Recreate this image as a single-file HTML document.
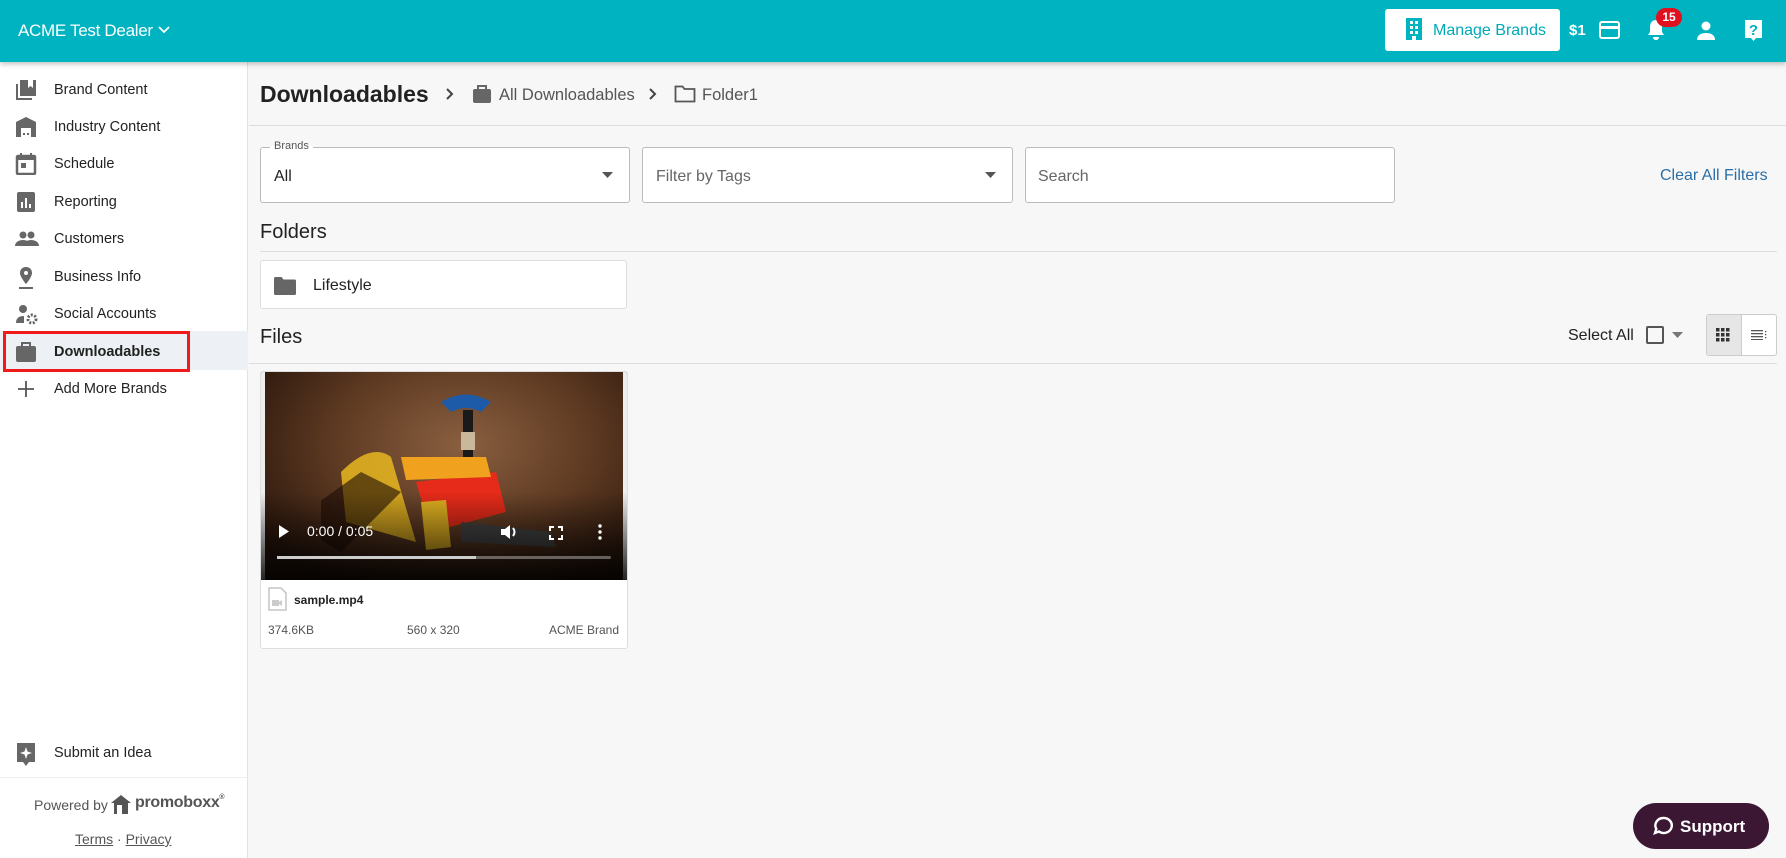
<!DOCTYPE html>
<html><head><meta charset="utf-8"><style>
*{box-sizing:border-box;margin:0;padding:0}
body{width:1786px;height:858px;overflow:hidden;background:#f7f7f7;font-family:"Liberation Sans",sans-serif;color:#222;position:relative}
.hdr{position:absolute;left:0;top:0;width:1786px;height:62px;background:#00b3c1;box-shadow:0 2px 5px rgba(0,0,0,.25);z-index:5}
.abs{position:absolute}
.side{position:absolute;left:0;top:62px;width:248px;height:796px;background:#fff;border-right:1px solid #e2e2e2}
.nav{position:absolute;left:0;width:248px;height:38px;font-size:14.5px;color:#222}
.nav span{position:absolute;left:54px;top:12px}
.nav svg{position:absolute;left:15px;top:9px}
.box{position:absolute;background:#fff;border:1px solid #ccc;border-radius:3px}
.ph{position:absolute;font-size:16px;color:#666}
</style></head><body>
<div class="hdr">
  <div class="abs" style="left:18px;top:21px;color:#fff;font-size:17px;letter-spacing:-0.3px">ACME Test Dealer</div>
  <svg class="abs" style="left:157px;top:25px" width="14" height="10" viewBox="0 0 14 10"><path d="M2 2l5 5 5-5" stroke="#fff" stroke-width="1.8" fill="none"/></svg>
  <div class="abs" style="left:1385px;top:9px;width:175px;height:42px;background:#fff;border-radius:3px"></div>
  <svg class="abs" style="left:1404px;top:18px" width="20" height="22" viewBox="0 0 20 22"><path d="M2 0h16v22H2z" fill="#00b3c1"/><g fill="#fff"><rect x="6" y="3" width="3" height="3"/><rect x="11" y="3" width="3" height="3"/><rect x="6" y="8" width="3" height="3"/><rect x="11" y="8" width="3" height="3"/><rect x="6" y="13" width="3" height="3"/><rect x="11" y="13" width="3" height="3"/><rect x="8" y="18" width="4" height="4"/></g></svg>
  <div class="abs" style="left:1433px;top:22px;color:#00a9b8;font-size:16px">Manage Brands</div>
  <div class="abs" style="left:1569px;top:22px;color:#fff;font-size:15px;font-weight:bold">$1</div>
  <svg class="abs" style="left:1599px;top:21px" width="21" height="18" viewBox="0 0 21 18"><rect x="1" y="1" width="19" height="16" rx="2" fill="none" stroke="#fff" stroke-width="2"/><rect x="1" y="5" width="19" height="3" fill="#fff"/></svg>
  <svg class="abs" style="left:1647px;top:19px" width="18" height="22" viewBox="0 0 18 22"><path d="M9 1c-4 0-6 3-6 7v5l-2 3h16l-2-3V8c0-4-2-7-6-7z M6 18h6c0 2-1.5 3-3 3s-3-1-3-3z" fill="#fff"/></svg>
  <div class="abs" style="left:1656px;top:8px;width:26px;height:19px;border-radius:10px;background:#e0101f;color:#fff;font-size:12px;font-weight:bold;text-align:center;line-height:19px">15</div>
  <svg class="abs" style="left:1696px;top:21px" width="20" height="19" viewBox="0 0 20 19"><circle cx="10" cy="5" r="4.5" fill="#fff"/><path d="M1 19c0-5 4-7 9-7s9 2 9 7z" fill="#fff"/></svg>
  <svg class="abs" style="left:1744px;top:19px" width="19" height="23" viewBox="0 0 19 23"><path d="M1 1h17v18h-6l-2.5 3-2.5-3H1z" fill="#fff"/><text x="9.5" y="16" text-anchor="middle" font-family="Liberation Sans" font-weight="bold" font-size="15" fill="#00b3c1">?</text></svg>
</div>

<div class="side">
  <div class="nav" style="top:8px"><svg width="22" height="22" viewBox="0 0 22 22"><path d="M1 5h2v14h14v2H1z" fill="#666"/><path d="M5 1h16v16H5z" fill="#666"/><path d="M13 1h5v8l-2.5-2-2.5 2z" fill="#fff"/></svg><span>Brand Content</span></div>
  <div class="nav" style="top:45px"><svg width="22" height="22" viewBox="0 0 22 22"><path d="M1 6l10-5 10 5v15H1z" fill="#666"/><rect x="6" y="12" width="10" height="9" fill="#fff"/><rect x="8" y="17" width="2" height="2" fill="#666"/><rect x="12" y="17" width="2" height="2" fill="#666"/></svg><span>Industry Content</span></div>
  <div class="nav" style="top:82px"><svg width="22" height="22" viewBox="0 0 22 22"><rect x="2" y="3" width="18" height="18" rx="1" fill="none" stroke="#666" stroke-width="2.5"/><rect x="2" y="3" width="18" height="4" fill="#666"/><rect x="5" y="0" width="2" height="4" fill="#666"/><rect x="15" y="0" width="2" height="4" fill="#666"/><rect x="6" y="10" width="5" height="5" fill="#666"/></svg><span>Schedule</span></div>
  <div class="nav" style="top:120px"><svg width="22" height="22" viewBox="0 0 22 22"><rect x="2" y="1" width="18" height="20" rx="2" fill="#666"/><g fill="#fff"><rect x="6" y="11" width="2" height="6"/><rect x="10" y="7" width="2" height="10"/><rect x="14" y="13" width="2" height="4"/></g></svg><span>Reporting</span></div>
  <div class="nav" style="top:157px"><svg width="24" height="22" viewBox="0 0 24 22"><circle cx="8" cy="7" r="3.5" fill="#666"/><circle cx="16" cy="7" r="3.5" fill="#666"/><path d="M0 18c0-4 4-6 8-6s8 2 8 6zM10 18c0-4 2-6 6-6s8 2 8 6z" fill="#666"/></svg><span>Customers</span></div>
  <div class="nav" style="top:195px"><svg width="22" height="24" viewBox="0 0 22 24"><path d="M11 1c-4 0-6 3-6 6 0 4 6 11 6 11s6-7 6-11c0-3-2-6-6-6z" fill="#666"/><circle cx="11" cy="7" r="2" fill="#fff"/><rect x="4" y="21" width="14" height="2" fill="#666"/></svg><span>Business Info</span></div>
  <div class="nav" style="top:232px"><svg width="24" height="22" viewBox="0 0 24 22"><circle cx="8" cy="6" r="4" fill="#666"/><path d="M1 20c0-5 3-7 8-7v7z" fill="#666"/><circle cx="17" cy="16" r="4" fill="none" stroke="#666" stroke-width="3" stroke-dasharray="2 1.5"/></svg><span>Social Accounts</span></div>
  <div class="abs" style="left:0;top:269px;width:248px;height:39px;background:#edf1f5"></div>
  <div class="abs" style="left:3px;top:269px;width:187px;height:41px;border:3px solid #f01a1a"></div>
  <div class="nav" style="top:270px"><svg width="22" height="22" viewBox="0 0 22 22"><path d="M7 5V2h8v3" fill="none" stroke="#666" stroke-width="2"/><rect x="1" y="5" width="20" height="16" rx="2" fill="#666"/></svg><span style="font-weight:bold">Downloadables</span></div>
  <div class="nav" style="top:307px"><svg width="22" height="22" viewBox="0 0 22 22"><path d="M11 3v16M3 11h16" stroke="#555" stroke-width="1.8"/></svg><span>Add More Brands</span></div>
  <div class="nav" style="top:671px"><svg width="22" height="26" viewBox="0 0 22 26"><path d="M2 1h18v19h-6l-3 4-3-4H2z" fill="#666"/><path d="M11 5l1.5 4.5 4.5 1.5-4.5 1.5-1.5 4.5-1.5-4.5-4.5-1.5 4.5-1.5z" fill="#fff"/></svg><span>Submit an Idea</span></div>
  <div class="abs" style="left:0;top:715px;width:248px;height:1px;background:#eee"></div>
  <div class="abs" style="left:34px;top:735px;font-size:14px;color:#555">Powered by</div>
  <svg class="abs" style="left:110px;top:732px" width="22" height="21" viewBox="0 0 22 21"><path d="M1 9L11 1l10 8h-3v11H4V9z" fill="#555"/><path d="M7 20V11h5v9" fill="#fff"/></svg>
  <div class="abs" style="left:135px;top:732px;font-size:16px;color:#555;font-weight:bold;letter-spacing:-0.3px">promoboxx<span style="font-size:7px;vertical-align:top">®</span></div>
  <div class="abs" style="left:75px;top:769px;font-size:14px;color:#555"><u>Terms</u> · <u>Privacy</u></div>
</div>

<div class="abs" style="left:260px;top:81px;font-size:23px;font-weight:bold;color:#222">Downloadables</div>
<svg class="abs" style="left:445px;top:87px" width="10" height="14" viewBox="0 0 10 14"><path d="M2 2l5 5-5 5" stroke="#444" stroke-width="2" fill="none"/></svg>
<svg class="abs" style="left:472px;top:84px" width="20" height="20" viewBox="0 0 20 20"><path d="M6 5V2h8v3" fill="none" stroke="#666" stroke-width="2"/><rect x="1" y="5" width="18" height="14" rx="2" fill="#666"/></svg>
<div class="abs" style="left:499px;top:86px;font-size:16.5px;color:#555">All Downloadables</div>
<svg class="abs" style="left:648px;top:87px" width="10" height="14" viewBox="0 0 10 14"><path d="M2 2l5 5-5 5" stroke="#444" stroke-width="2" fill="none"/></svg>
<svg class="abs" style="left:674px;top:85px" width="22" height="18" viewBox="0 0 22 18"><path d="M1.5 1.5h7l2 2.5h10v12.5h-19z" fill="none" stroke="#555" stroke-width="1.8"/></svg>
<div class="abs" style="left:702px;top:86px;font-size:16.5px;color:#555">Folder1</div>
<div class="abs" style="left:249px;top:125px;width:1537px;height:1px;background:#ddd"></div>

<div class="box" style="left:260px;top:147px;width:370px;height:56px;border-color:#bbb"></div>
<div class="abs" style="left:270px;top:140px;padding:0 4px;background:linear-gradient(#f7f7f7 50%,#fff 50%);font-size:11px;color:#555">Brands</div>
<div class="abs" style="left:274px;top:168px;font-size:16px;color:#222">All</div>
<svg class="abs" style="left:602px;top:172px" width="12" height="8"><path d="M0 0h11L5.5 6z" fill="#555"/></svg>
<div class="box" style="left:642px;top:147px;width:371px;height:56px;border-color:#bbb"></div>
<div class="ph" style="left:656px;top:168px">Filter by Tags</div>
<svg class="abs" style="left:985px;top:172px" width="12" height="8"><path d="M0 0h11L5.5 6z" fill="#555"/></svg>
<div class="box" style="left:1025px;top:147px;width:370px;height:56px;border-color:#bbb"></div>
<div class="ph" style="left:1038px;top:168px">Search</div>
<div class="abs" style="left:1660px;top:167px;font-size:16px;color:#2b6fa6">Clear All Filters</div>

<div class="abs" style="left:260px;top:221px;font-size:20px;color:#222">Folders</div>
<div class="abs" style="left:260px;top:251px;width:1517px;height:1px;background:#ddd"></div>
<div class="box" style="left:260px;top:260px;width:367px;height:49px;border-color:#ddd"></div>
<svg class="abs" style="left:274px;top:277px" width="22" height="18" viewBox="0 0 22 18"><path d="M0 1.5Q0 0 1.5 0h6l2 2.5h11Q22 2.5 22 4v12.5Q22 18 20.5 18h-19Q0 18 0 16.5z" fill="#666"/></svg>
<div class="abs" style="left:313px;top:277px;font-size:16px;color:#222">Lifestyle</div>

<div class="abs" style="left:260px;top:326px;font-size:20px;color:#222">Files</div>
<div class="abs" style="left:1568px;top:327px;font-size:16px;color:#222">Select All</div>
<div class="abs" style="left:1646px;top:326px;width:18px;height:18px;border:2px solid #555;border-radius:2px"></div>
<svg class="abs" style="left:1672px;top:332px" width="12" height="7"><path d="M0 0h11L5.5 6z" fill="#777"/></svg>
<div class="abs" style="left:1706px;top:314px;width:71px;height:42px;border:1px solid #ccc;border-radius:3px;background:#fff;overflow:hidden"><div style="width:35px;height:42px;background:#e6e6e6;border-right:1px solid #ccc"></div></div>
<svg class="abs" style="left:1716px;top:328px" width="14" height="14" viewBox="0 0 14 14" fill="#333"><rect x="0" y="0" width="3.5" height="3.5"/><rect x="5" y="0" width="3.5" height="3.5"/><rect x="10" y="0" width="3.5" height="3.5"/><rect x="0" y="5" width="3.5" height="3.5"/><rect x="5" y="5" width="3.5" height="3.5"/><rect x="10" y="5" width="3.5" height="3.5"/><rect x="0" y="10" width="3.5" height="3.5"/><rect x="5" y="10" width="3.5" height="3.5"/><rect x="10" y="10" width="3.5" height="3.5"/></svg>
<svg class="abs" style="left:1751px;top:330px" width="16" height="10" viewBox="0 0 16 10" fill="#555"><rect y="0" width="12" height="1.3"/><rect y="3" width="12" height="1.3"/><rect y="6" width="12" height="1.3"/><rect y="9" width="12" height="1.3"/><rect x="14" y="1" width="1.3" height="1.3"/><rect x="14" y="4" width="1.3" height="1.3"/><rect x="14" y="7" width="1.3" height="1.3"/></svg>
<div class="abs" style="left:249px;top:363px;width:1528px;height:1px;background:#ddd"></div>

<div class="box" style="left:260px;top:371px;width:368px;height:278px;border-color:#ddd;overflow:hidden">
  <div style="position:absolute;left:0;top:0;width:366px;height:208px;background:radial-gradient(ellipse at 55% 35%,#8a5f40 0%,#5e3a22 45%,#2a160c 85%);"></div>
  <div style="position:absolute;left:0;top:0;width:4px;height:208px;background:#eee"></div>
  <div style="position:absolute;left:362px;top:0;width:4px;height:208px;background:#eee"></div>
  <svg style="position:absolute;left:60px;top:10px" width="260" height="180" viewBox="0 0 260 180">
    <path d="M120 20 Q145 5 170 20 L160 30 Q145 22 130 30z" fill="#1d5aa8"/>
    <rect x="142" y="28" width="10" height="60" fill="#1a1a1a"/><rect x="140" y="50" width="14" height="18" fill="#c9b89a"/>
    <path d="M25 140 L20 90 Q50 60 70 75 L95 160z" fill="#e0b020" opacity=".9"/>
    <path d="M-30 140 L40 90 L80 110 L20 170z" fill="#1c0c05" opacity=".6"/>
    <path d="M95 100 L175 90 L185 130 L110 150z" fill="#e62b1a"/>
    <path d="M80 75 L165 75 L170 95 L85 98z" fill="#f0a21e"/>
    <path d="M100 120 L125 118 L130 165 L105 168z" fill="#e0b020"/>
    <path d="M140 140 L230 150 L235 165 L140 160z" fill="#444"/>
  </svg>
  <div style="position:absolute;left:0;top:120px;width:366px;height:88px;background:linear-gradient(transparent,rgba(0,0,0,.85))"></div>
  <svg style="position:absolute;left:18px;top:153px" width="10" height="13"><path d="M0 0l10 6.5L0 13z" fill="#fff"/></svg>
  <div style="position:absolute;left:46px;top:151px;color:#fff;font-size:14px">0:00 / 0:05</div>
  <svg style="position:absolute;left:240px;top:152px" width="18" height="16" viewBox="0 0 18 16"><path d="M0 5h4l5-4v14l-5-4H0z" fill="#fff"/><path d="M12 4q3 4 0 8" stroke="#fff" stroke-width="2" fill="none"/></svg>
  <svg style="position:absolute;left:288px;top:154px" width="14" height="14" viewBox="0 0 14 14" stroke="#fff" stroke-width="2" fill="none"><path d="M1 5V1h4M9 1h4v4M13 9v4H9M5 13H1V9"/></svg>
  <svg style="position:absolute;left:337px;top:152px" width="4" height="16" fill="#fff"><circle cx="2" cy="2" r="1.7"/><circle cx="2" cy="8" r="1.7"/><circle cx="2" cy="14" r="1.7"/></svg>
  <div style="position:absolute;left:16px;top:184px;width:334px;height:3px;background:rgba(255,255,255,.35);border-radius:2px"><div style="width:199px;height:3px;background:#ccc"></div></div>
  <svg style="position:absolute;left:7px;top:215px" width="19" height="24" viewBox="0 0 19 24"><path d="M1 1h12l5 5v17H1z" fill="#fff" stroke="#bbb" stroke-width="1.3"/><rect x="4" y="13" width="7" height="6" fill="#ccc"/><path d="M11 15l3-2v6l-3-2z" fill="#ccc"/></svg>
  <div style="position:absolute;left:33px;top:221px;font-size:12px;font-weight:bold;color:#222">sample.mp4</div>
  <div style="position:absolute;left:7px;top:251px;font-size:12px;color:#555">374.6KB</div>
  <div style="position:absolute;left:146px;top:251px;font-size:12px;color:#555">560 x 320</div>
  <div style="position:absolute;right:8px;top:251px;font-size:12px;color:#555">ACME Brand</div>
</div>

<div class="abs" style="left:1633px;top:803px;width:136px;height:46px;border-radius:23px;background:#3b1733"></div>
<svg class="abs" style="left:1653px;top:816px" width="21" height="20" viewBox="0 0 21 20"><path d="M10.5 2a8 7.5 0 1 1-4.5 13.5L2 17l1.3-4A8 7.5 0 0 1 10.5 2z" fill="none" stroke="#fff" stroke-width="2.4"/></svg>
<div class="abs" style="left:1680px;top:817px;color:#fff;font-size:17px;font-weight:bold">Support</div>
</body></html>
